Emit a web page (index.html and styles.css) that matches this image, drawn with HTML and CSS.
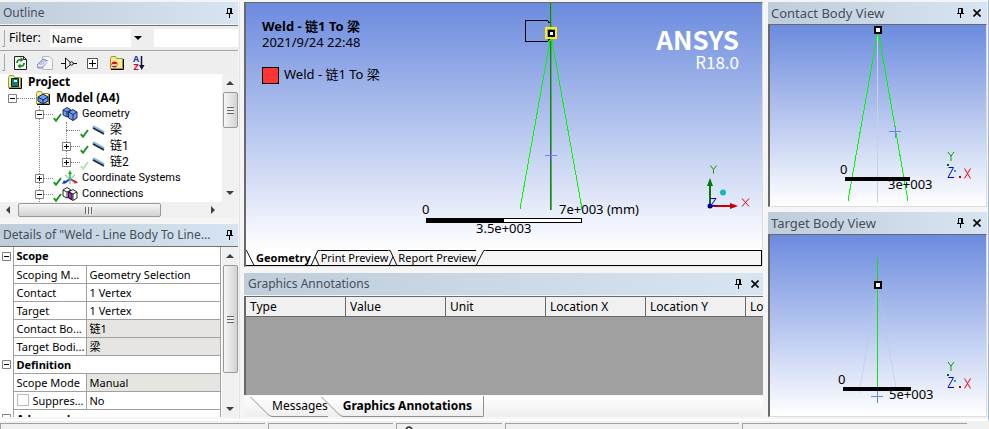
FILE: index.html
```html
<!DOCTYPE html>
<html lang="en">
<head>
<meta charset="utf-8">
<title>Mechanical</title>
<link rel="stylesheet" href="styles.css">
</head>
<body>
<svg class="defs" aria-hidden="true">
  <defs>
    <linearGradient id="sky" x1="0" y1="0" x2="0" y2="1"><stop offset="0" stop-color="#6b8bde"/><stop offset="1" stop-color="#ffffff"/></linearGradient>
    <symbol id="pin" viewBox="0 0 8 10"><path d="M1.500 5V.5h4V5M4.500 .5V5M5.500 .5V5M0 5.500h7M3.500 6v4" fill="none" stroke="#000"/></symbol>
    <symbol id="close" viewBox="0 0 8 8"><path d="M.5.5l7 7M7.500.5l-7 7" fill="none" stroke="#000" stroke-width="1.600"/></symbol>
    <symbol id="up" viewBox="0 0 8 4"><path d="M4 0L8 4H0z" fill="#404040"/></symbol>
    <symbol id="down" viewBox="0 0 8 4"><path d="M4 4L8 0H0z" fill="#404040"/></symbol>
    <symbol id="left" viewBox="0 0 4 8"><path d="M0 4L4 0V8z" fill="#404040"/></symbol>
    <symbol id="right" viewBox="0 0 4 8"><path d="M4 4L0 0V8z" fill="#404040"/></symbol>
    <symbol id="check" viewBox="0 0 9 9"><path d="M.8 5.200L3 7.800L8 1" fill="none" stroke="#0a960a" stroke-width="1.800"/></symbol>
    <symbol id="folder" viewBox="0 0 16 16"><path d="M1.500 3.500l1-2h4l1 2h6v10h-12z" fill="#f7ec8e" stroke="#a09530"/><path d="M2 14.500h12.500V4" fill="none" stroke="#000"/></symbol>
    <symbol id="line-body" viewBox="0 0 14 16"><path d="M1 4.500L12 10.500" stroke="#8db7ea" stroke-width="3"/><path d="M1 6L12 12" stroke="#20242c" stroke-width="1.500"/></symbol>
    <symbol id="plus" viewBox="0 0 9 9"><path d="M.5.5h8v8h-8z" fill="#fff" stroke="#808080"/><path d="M2 4.500h5M4.500 2v5" stroke="#000"/></symbol>
    <symbol id="minus" viewBox="0 0 9 9"><path d="M.5.5h8v8h-8z" fill="#fff" stroke="#808080"/><path d="M2 4.500h5" stroke="#000"/></symbol>
    <symbol id="cubes" viewBox="0 0 16 16"><g fill="#6d9af0" stroke="#14204f" stroke-width=".9"><path d="M1 4l4-2.500L9 4v5l-4 2-4-2z"/><path d="M1 4l4 2 4-2M5 6v5" fill="none"/><path d="M6.500 6L11 3.500 15 6v6l-4 2.500L6.500 12z"/><path d="M6.500 6L11 8.500 15 6M11 8.500v6" fill="none"/></g></symbol>
    <symbol id="small-axes" viewBox="0 0 26 32"><path d="M3 2l3 4 3-4M6 6v5" fill="none" stroke="#00a000"/><path d="M3.500 17.500h5L3 27.500h6" fill="none" stroke="#0000f0"/><path d="M19.500 18.500l6 10M25.500 18.500l-6 10" stroke="#f00000"/><path d="M2 14h2v2H2z" fill="#006400"/><path d="M9 20h2v2H9z" fill="#00b4b4"/><path d="M14 26h2v2h-2z" fill="#b40000"/></symbol>
  </defs>
</svg>

<main class="workspace">
  <div class="column side">
    <section class="panel outline">
      <header class="title"><h2>Outline</h2><button aria-label="Pin Outline"><svg class="pin"><use href="#pin"/></svg></button></header>
      <div class="toolbar">
        <i class="grip"></i>
        <label for="filter">Filter:</label>
        <select id="filter"><option>Name</option></select>
        <svg class="select-arrow" viewBox="0 0 14 18"><path d="M0 0h14v18H0z" fill="#eee"/><path d="M3 7h8l-4 4z"/></svg>
        <input class="search" type="text" aria-label="Filter text">
      </div>
      <div class="toolbar icons">
        <i class="grip"></i>
        <button aria-label="Refresh"><svg viewBox="0 0 16 16"><path d="M1.500 1.500h9l3 3v10h-12z" fill="#fff" stroke="#222"/><path d="M10.500 1.500v3h3" fill="none" stroke="#222"/><path d="M4 8c0-3 2-3.500 4-3M11 8c0 3-2 3.500-4 3" fill="none" stroke="#168b16" stroke-width="1.800"/><path d="M7.500 2l3 2.700-3 2.600zM7.500 8.500l-3 2.600 3 2.700z" fill="#168b16"/></svg></button>
        <button aria-label="Clear"><svg viewBox="0 0 16 16"><path d="M5.500 1.500h7l3 3v10h-10z" fill="#f4f4fa" stroke="#b8b8c4"/><path d="M0 10l6-6 5 2-6 7-4 0z" fill="#c3c8ea" stroke="#8086b4"/><path d="M1 10l4 1 6-5" fill="none" stroke="#fff"/></svg></button>
        <button aria-label="Not"><svg viewBox="0 0 16 16"><path d="M0 8.500h4M11 8.500h5M4.500 3v11l6-5.500z" fill="none" stroke="#111"/><circle cx="10.500" cy="8.500" r="1.700" fill="#eee" stroke="#111"/></svg></button>
        <button aria-label="Expand all"><svg viewBox="0 0 16 16"><path d="M2.500 3.500h10v10h-10z" fill="#fff" stroke="#555"/><path d="M4 8.500h7M7.500 5v7" stroke="#000"/></svg></button>
        <button aria-label="Hide suppressed"><svg viewBox="0 0 16 16"><use href="#folder"/><circle cx="5.500" cy="9.500" r="3" fill="#d4102a"/><path d="M3 10h5" stroke="#fff" stroke-width="1.500"/></svg></button>
        <button aria-label="Sort A to Z"><span class="sort"><b>A</b><b>Z</b></span><svg class="sort-arrow" viewBox="0 0 6 14"><path d="M2.500 0v11" stroke="#101040" stroke-width="1.500"/><path d="M0 9h5.500L2.700 14z" fill="#101040"/></svg></button>
      </div>
      <div class="tree-area">
        <ul class="tree">
          <li class="row root"><svg class="ico"><use href="#folder"/><path d="M4.500 4.500h7v8h-7z" fill="#0c8078" stroke="#023"/><path d="M7 6h3v2H7z" fill="#fff"/></svg><b>Project</b></li>
          <li><div class="row model"><svg class="exp"><use href="#minus"/></svg><i class="dots long"></i><svg class="ico"><use href="#folder"/><path d="M3 7l5-3 5 3v4l-5 3-5-3z" fill="#6d9af0" stroke="#102060"/><path d="M3 7l5 3 5-3M8 10v4" fill="none" stroke="#102060"/></svg><b>Model (A4)</b></div>
            <ul class="level two">
              <li><div class="row"><svg class="exp"><use href="#minus"/></svg><i class="dots"></i><svg class="check"><use href="#check"/></svg><svg class="ico"><use href="#cubes"/></svg><span>Geometry</span></div>
                <ul class="level three">
                  <li class="row"><i class="dots leaf"></i><svg class="check"><use href="#check"/></svg><svg class="beam"><use href="#line-body"/></svg><span>梁</span></li>
                  <li class="row"><svg class="exp"><use href="#plus"/></svg><i class="dots"></i><svg class="check"><use href="#check"/></svg><svg class="beam"><use href="#line-body"/></svg><span>链1</span></li>
                  <li class="row"><svg class="exp"><use href="#plus"/></svg><i class="dots"></i><svg class="check faded"><use href="#check"/></svg><svg class="beam"><use href="#line-body"/></svg><span>链2</span></li>
                </ul>
              </li>
              <li class="row"><svg class="exp"><use href="#plus"/></svg><i class="dots"></i><svg class="check"><use href="#check"/></svg><svg class="ico" viewBox="0 0 16 16"><path d="M8 9V2" stroke="#10c010" stroke-width="1.500"/><path d="M8 0l2 4H6z" fill="#10c010"/><path d="M8 9l-6 4" stroke="#1030d0" stroke-width="1.600"/><path d="M0 14l2-4 2 3z" fill="#1030d0"/><path d="M8 9l6 3" stroke="#e01010" stroke-width="1.600"/><path d="M16 13l-4 .5 1.500-3z" fill="#e01010"/><path d="M3 5l10 8M13 5L4 13M8 9v5" stroke="#777" stroke-width=".8"/><circle cx="8" cy="9" r="1.500" fill="#18c8d0"/></svg><span>Coordinate Systems</span></li>
              <li class="row"><svg class="exp"><use href="#minus"/></svg><i class="dots"></i><svg class="check"><use href="#check"/></svg><svg class="ico" viewBox="0 0 16 16"><g fill="#fff" stroke="#111" stroke-width=".9"><path d="M1 4l4-2.500L9 4v6l-4 2-4-2z"/><path d="M1 4l4 2 4-2M5 6v6" fill="none"/><path d="M6.500 6L11 3.500 15 6v6l-4 2.500L6.500 12z"/><path d="M6.500 6L10 8v5.500l-3.500-2z" fill="#c020e0"/><path d="M7 6l4 2 4-2M11 8v6" fill="none"/></g></svg><span>Connections</span></li>
            </ul>
          </li>
        </ul>
        <div class="vscroll"><svg class="arrow-v"><use href="#up"/></svg><div class="thumb short"><i></i></div><svg class="arrow-v last"><use href="#down"/></svg></div>
      </div>
      <div class="hscroll"><svg class="arrow-h"><use href="#left"/></svg><div class="hthumb"><i></i></div><svg class="arrow-h last"><use href="#right"/></svg></div>
    </section>

    <section class="panel details">
      <header class="title"><h2>Details of "Weld - Line Body To Line...</h2><button aria-label="Pin Details"><svg class="pin"><use href="#pin"/></svg></button></header>
      <div class="details-area">
        <div class="details-clip">
        <table class="props">
          <colgroup><col class="gutter"><col class="name"><col></colgroup>
          <tbody>
            <tr><td><svg class="exp"><use href="#minus"/></svg></td><th colspan="2">Scope</th></tr>
            <tr><td></td><td>Scoping M...</td><td>Geometry Selection</td></tr>
            <tr><td></td><td>Contact</td><td>1 Vertex</td></tr>
            <tr><td></td><td>Target</td><td>1 Vertex</td></tr>
            <tr><td></td><td>Contact Bo...</td><td class="locked">链1</td></tr>
            <tr><td></td><td>Target Bodi...</td><td class="locked">梁</td></tr>
            <tr><td><svg class="exp"><use href="#minus"/></svg></td><th colspan="2">Definition</th></tr>
            <tr><td></td><td>Scope Mode</td><td class="locked">Manual</td></tr>
            <tr><td></td><td><label class="suppress"><input type="checkbox">Suppres...</label></td><td>No</td></tr>
            <tr><td><svg class="exp"><use href="#minus"/></svg></td><th colspan="2">Advanced</th></tr>
          </tbody>
        </table>
        </div>
        <div class="vscroll"><svg class="arrow-v"><use href="#up"/></svg><div class="thumb tall"><i></i></div><svg class="arrow-v last"><use href="#down"/></svg></div>
      </div>
    </section>
  </div>

  <div class="column center">
    <section class="viewer">
      <svg class="scene" viewBox="0 0 516 247" preserveAspectRatio="none">
        <path d="M0 0h516v247H0z" fill="url(#sky)"/>
        <g class="crisp" fill="none">
          <path d="M304.500 0v207" stroke="#555" /><path d="M305.500 0v207" stroke="#10d820"/>
          <path d="M305 32L274 206M305 32l31 174" stroke="#00f800"/>
          <path d="M299 152.500h12M305.500 147v12" stroke="#6888dc"/>
          <path d="M303.500 20l-2-2.500h-22v21h22l3-4" stroke="#000"/>
          <path d="M300 25h10v10h-10z" stroke="#ffee00" stroke-width="2"/>
          <path d="M302.500 27.500h5v5h-5z" fill="#fff" stroke="#000" stroke-width="2"/>
          <path d="M16.500 64.500h16v16h-16z" fill="#ff3535" stroke="#000"/>
          <path d="M180.500 215.500h155v4h-155z" fill="#fff" stroke="#000"/><path d="M180 215h78v5h-78z" fill="#000"/>
        </g>
        <text class="scene-text bold" x="16" y="28">Weld - 链1 To 梁</text>
        <text class="scene-text" x="16" y="44">2021/9/24 22:48</text>
        <text class="scene-text" x="38" y="76">Weld - 链1 To 梁</text>
        <text class="scene-text" x="176" y="211">0</text>
        <text class="scene-text" x="313" y="211">7e+003 (mm)</text>
        <text class="scene-text" x="230" y="230">3.5e+003</text>
        <text class="brand" x="493" y="47" text-anchor="end">ANSYS</text>
        <text class="release" x="493" y="66" text-anchor="end">R18.0</text>
        <path d="M464 203v-20" stroke="#087508" stroke-width="2"/><path d="M464 175l3 8h-6z" fill="#087508"/>
        <path d="M464 203h20" stroke="#c80000" stroke-width="2"/><path d="M492 203l-8-3v6z" fill="#c80000"/>
        <circle cx="464" cy="203" r="2.500" fill="#000088"/><circle cx="477" cy="189.500" r="3" fill="#18b8b8"/>
        <path d="M464 195.500h6l-5 7h6" fill="none" stroke="#0000e8"/>
        <path d="M464.500 162.500l3 4 3-4M467.500 166.500v4" fill="none" stroke="#00a000"/>
        <path d="M496 195.500l7 8M503 195.500l-7 8" stroke="#e80000"/>
      </svg>
      <nav class="view-tabs">
        <svg class="edge first" viewBox="0 0 10 16"><path d="M0 0l8 16" /></svg>
        <button class="selected">Geometry</button>
        <svg class="edge" viewBox="0 0 10 16"><path d="M0 0h6L0 16z" class="white"/><path d="M10 .5H7L0 16M4 7l4 9"/></svg>
        <button>Print Preview</button>
        <svg class="edge" viewBox="0 0 10 16"><path d="M0 .5h2l7 15.500M1 16l4-9"/></svg>
        <button>Report Preview</button>
        <svg class="edge" viewBox="0 0 10 16"><path d="M0 16L8 .5h2"/></svg>
        <i class="fill"></i>
      </nav>
    </section>
    <section class="panel annotations">
      <header class="title"><h2>Graphics Annotations</h2><button aria-label="Pin Annotations"><svg class="pin"><use href="#pin"/></svg></button><button aria-label="Close Annotations"><svg class="close"><use href="#close"/></svg></button></header>
      <div class="grid-area">
        <table class="notes"><thead><tr><th>Type</th><th>Value</th><th>Unit</th><th>Location X</th><th>Location Y</th><th>Location Z</th></tr></thead></table>
      </div>
      <nav class="bottom-tabs">
        <svg class="slope" viewBox="0 0 22 21"><path d="M0 .5L17 17.500Q20 20.500 22 20.500"/></svg>
        <button class="messages">Messages</button>
        <svg class="slope second" viewBox="0 0 22 21"><path d="M0 .5L17 17.500Q20 20.500 22 20.500"/></svg>
        <button class="active">Graphics Annotations</button>
      </nav>
    </section>
  </div>

  <div class="column views">
    <section class="panel">
      <header class="title"><h2>Contact Body View</h2><button aria-label="Pin Contact Body View"><svg class="pin"><use href="#pin"/></svg></button><button aria-label="Close Contact Body View"><svg class="close"><use href="#close"/></svg></button></header>
      <svg class="body-scene" viewBox="0 0 216 181" preserveAspectRatio="none">
        <path d="M0 0h216v181H0z" fill="url(#sky)"/>
        <g class="crisp" fill="none">
          <path d="M107.500 5v172" stroke="#c8d0e4"/>
          <path d="M108 5L78 176M108 5l30 171" stroke="#00f800"/>
          <path d="M119 106.500h12M125.500 101v12" stroke="#6888dc"/>
          <path d="M105 2h6v6h-6z" fill="#fff" stroke="#000" stroke-width="2"/>
          <path d="M75 152h65v4H75z" fill="#000"/>
        </g>
        <text class="scene-text" x="70" y="149">0</text><text class="scene-text" x="118" y="164">3e+003</text>
        <use href="#small-axes" x="175" y="125" width="26" height="32"/>
      </svg>
    </section>
    <section class="panel">
      <header class="title"><h2>Target Body View</h2><button aria-label="Pin Target Body View"><svg class="pin"><use href="#pin"/></svg></button><button aria-label="Close Target Body View"><svg class="close"><use href="#close"/></svg></button></header>
      <svg class="body-scene" viewBox="0 0 216 181" preserveAspectRatio="none">
        <path d="M0 0h216v181H0z" fill="url(#sky)"/>
        <g class="crisp" fill="none">
          <path d="M108 52L89 158M108 52l19 106" stroke="#b4c8ec" stroke-opacity=".5"/>
          <path d="M107.500 23v133" stroke="#10e020"/>
          <path d="M101 161.500h12M107.500 156v12" stroke="#6888dc"/>
          <path d="M105 47h6v6h-6z" fill="#fff" stroke="#000" stroke-width="2"/>
          <path d="M73 152h68v4H73z" fill="#000"/>
        </g>
        <text class="scene-text" x="68" y="149">0</text><text class="scene-text" x="119" y="164">5e+003</text>
        <use href="#small-axes" x="175" y="125" width="26" height="32"/>
      </svg>
    </section>
  </div>
</main>
<footer class="status"><i></i><i></i><i><svg viewBox="0 0 8 3"><path d="M1 3Q4-1 7 3" fill="none" stroke="#222" stroke-width="1.500"/></svg></i><i></i><i></i></footer>
</body>
</html>
```
FILE: styles.css
```css
* { box-sizing: border-box; }
body {
  margin: 0; height: 100vh; display: flex; flex-direction: column; overflow: hidden;
  background: #f0f0f0; color: #000;
  font: 12px/16px "Noto Sans", "Noto Sans CJK SC", sans-serif;
}
button { border: 0; padding: 0; background: none; color: inherit; font: inherit; display: flex; align-items: center; }
svg { display: block; flex: none; }
h2, ul { margin: 0; padding: 0; list-style: none; }
.defs { position: absolute; width: 0; height: 0; }

.workspace {
  flex: 1; min-height: 0; display: grid; padding: 2px 1px 0 0;
  grid-template-columns: 240px minmax(0, 1fr) 219px; column-gap: 4px;
  background: #f5f5f5; border-right: 1px solid #9fb9d5; border-bottom: 2px solid #fff;
}
.column { display: grid; min-height: 0; min-width: 0; row-gap: 6px; padding-bottom: 2px; }
.side { grid-template-rows: 216px minmax(0, 1fr); border-right: 1px solid #e2e2e2; }
.center { grid-template-rows: 265px minmax(0, 1fr); margin-right: 1px; }
.views { grid-template-rows: 1fr 1fr; row-gap: 5px; }
.panel { display: flex; flex-direction: column; min-height: 0; min-width: 0; }

.title {
  flex: none; height: 22px; display: flex; align-items: center; gap: 8px; padding: 0 4px 0 3px;
  background: linear-gradient(90deg, #bfcddb, #d7e4f2); color: #454f5b;
}
.title h2 { flex: 1; font-size: 12px; font-weight: 400; white-space: nowrap; }
.views .title { padding-right: 6px; }
.views .title h2 { font-size: 13px; }
.pin { width: 8px; height: 10px; }
.close { width: 8px; height: 8px; }

.outline { margin-right: 1px; }
.toolbar {
  flex: none; height: 26px; display: flex; align-items: center; margin-top: 1px; padding-left: 2px;
  background: #eee; border-top: 1px solid #707070; border-bottom: 1px solid #a6a6a6;
}
.toolbar.icons { height: 23px; margin: 0; border: 0; gap: 8px; }
.grip { width: 3px; height: 17px; border: 1px solid #aaa; border-width: 0 1px 1px 0; }
.toolbar label { padding: 0 9px 0 4px; }
.toolbar select {
  appearance: none; width: 81px; height: 18px; border: 0; border-radius: 0; padding: 2px 2px 0;
  background: #fff; font: inherit; font-size: 11px;
}
.select-arrow { width: 14px; height: 18px; }
.search { flex: 1; min-width: 0; height: 18px; margin-left: 9px; border: 0; background: #fff; }
.icons svg { width: 16px; height: 16px; }
.sort { display: flex; flex-direction: column; font-size: 9px; line-height: 8px; color: #24429c; }
.sort b + b { color: #c3102d; }
.icons .sort-arrow { width: 6px; height: 14px; }

.tree-area { flex: 1; min-height: 0; display: flex; overflow: hidden; background: #fff; }
.tree { flex: 1; min-width: 0; font-size: 11px; }
.row { display: flex; align-items: center; height: 16px; padding-left: 8px; white-space: nowrap; }
.row b { font-size: 12px; margin-left: 5px; }
.root.row { padding-left: 7px; }
.row span { margin-left: 4px; }
.level { position: relative; font-family: Roboto, "Noto Sans CJK SC", sans-serif; }
.level::before { content: ""; position: absolute; top: 0; bottom: 0; left: 39px; border-left: 1px dotted #808080; }
.three::before { left: 66px; bottom: 8px; }
.level .row { position: relative; padding-left: 35px; }
.level .three .row { padding-left: 62px; font-size: 12px; }
.exp { width: 9px; height: 9px; }
.ico { width: 16px; height: 16px; }
.beam { width: 14px; height: 16px; margin-left: 3px; }
.check { width: 9px; height: 9px; align-self: flex-end; }
.faded { opacity: .3; }
.dots { width: 9px; border-top: 1px dotted #808080; }
.dots.long { width: 18px; }
.dots.leaf { width: 14px; margin-left: 4px; }

.vscroll {
  flex: none; width: 16px; display: flex; flex-direction: column; align-items: center;
  background: #f0f0f0;
}
.arrow-v { width: 8px; height: 4px; margin: 7px 0; }
.arrow-h { width: 4px; height: 8px; margin: 0 8px 0 6px; }
.vscroll .last { margin-top: auto; }
.hscroll .last { margin: 0 23px 0 auto; }
.thumb {
  width: 15px; display: flex; align-items: center; justify-content: center;
  background: linear-gradient(90deg, #f6f6f6, #d2d2d2); border: 1px solid #999; border-radius: 2px;
}
.thumb.short { height: 36px; }
.thumb.tall { height: 108px; }
.thumb.tall + .last { margin-bottom: 6px; }
.thumb i { width: 7px; height: 7px; background: repeating-linear-gradient(#666 0 1px, #eee 1px 3px); }
.hscroll { flex: none; height: 16px; display: flex; align-items: center; background: #f0f0f0; }
.hthumb {
  width: 60%; height: 14px; display: flex; align-items: center; justify-content: center;
  background: linear-gradient(#f6f6f6, #d2d2d2); border: 1px solid #999; border-radius: 2px;
}
.hthumb i { width: 8px; height: 7px; background: repeating-linear-gradient(90deg, #666 0 1px, #eee 1px 3px); }

.details { margin-right: 1px; }
.details-area { flex: 1; min-height: 0; display: flex; border-top: 1px solid #707070; background: #fff; overflow: hidden; }
.details-clip { flex: 1; min-width: 0; overflow: hidden; padding-right: 1px; }
.props { width: 100%; table-layout: fixed; border-collapse: collapse; font-size: 11px; }
.gutter { width: 13px; }
.name { width: 73px; }
.props td, .props th {
  height: 18px; padding: 0 0 0 3px; line-height: 17px; text-align: left; white-space: nowrap; overflow: hidden;
  border-right: 1px solid #a0a0a0; border-bottom: 1px solid #a0a0a0;
}
.props td:first-child { padding-left: 2px; border-bottom: 0; }
.props .locked { background: #e6e5e2; }
.suppress { display: flex; align-items: center; gap: 4px; }
.suppress input { appearance: none; flex: none; width: 12px; height: 12px; margin: 0; border: 1px solid #bbb; background: #fff; }

.viewer { display: flex; flex-direction: column; min-height: 0; border: 1px solid #696969; border-width: 1px 1px 1px 2px; border-right-color: #ddd; border-bottom-color: #ddd; }
.scene { width: 100%; flex: 1; min-height: 0; }
.crisp { shape-rendering: crispEdges; }
.scene-text { font-size: 13px; }
.scene-text.bold { font-weight: 700; }
.brand, .release { font-family: "Noto Sans CJK SC", sans-serif; fill: #fff; }
.brand { font-size: 26px; font-weight: 700; }
.release { font-size: 17px; }
.view-tabs { flex: none; height: 16px; display: flex; font-size: 11px; border-bottom: 1px solid #000; }
.view-tabs button { border-top: 1px solid #000; line-height: 14px; white-space: nowrap; }
.view-tabs .selected { border-color: #fff; background: #fff; font-weight: 700; }
.edge { width: 10px; height: 15px; fill: none; stroke: #000; }
.edge.first { background: #fff; }
.edge .white { fill: #fff; stroke: none; }
.fill { flex: 1; border: 1px solid #000; border-width: 1px 1px 0 0; }

.annotations .title { padding-left: 4px; }
.grid-area { flex: 1; min-height: 0; margin: 1px 0; overflow: hidden; background: #a0a0a0; border: 1px solid #696969; border-width: 1px 0 0 2px; }
.notes { width: 600px; table-layout: fixed; border-spacing: 0; }
.notes th {
  width: 100px; height: 20px; padding: 0 0 0 4px; font-weight: 400; text-align: left; line-height: 18px;
  background: #f0f0f0; border-right: 1px solid #696969; border-bottom: 1px solid #696969;
}
.bottom-tabs { flex: none; height: 21px; display: flex; padding-left: 6px; background: linear-gradient(#fff, #eee); }
.slope { width: 22px; height: 21px; fill: none; stroke: #909090; }
.slope.second { margin-left: -7px; }
.messages { border-bottom: 1px solid #909090; }
.active { padding-right: 11px; border: 1px solid #909090; border-width: 0 1px 1px 0; border-radius: 0 0 2px 0; font-weight: 700; }

.body-scene { width: 100%; flex: 1; min-height: 0; border: 1px solid #696969; border-width: 1px 1px 1px 2px; border-right-color: #ddd; border-bottom-color: #ddd; }

.status { flex: none; height: 8px; display: grid; grid-template-columns: 265px 125px 106px 1fr 225px; column-gap: 3px; padding: 2px 22px 0 0; }
.status i { border: 1px solid #a0a0a0; border-width: 1px 0 0 1px; }
.status svg { width: 8px; height: 3px; margin: 2px 0 0 8px; }
```
